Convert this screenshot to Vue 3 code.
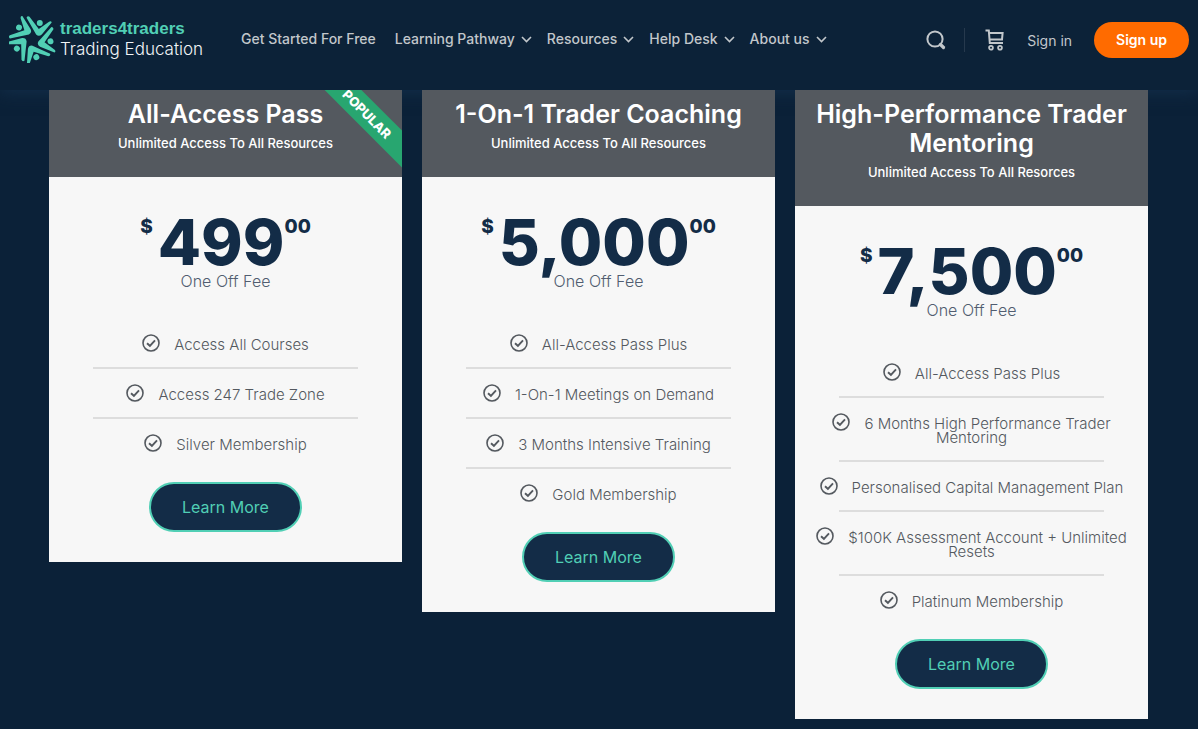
<script setup>
const navItems = [
  { label: 'Get Started For Free', menu: false },
  { label: 'Learning Pathway', menu: true },
  { label: 'Resources', menu: true },
  { label: 'Help Desk', menu: true },
  { label: 'About us', menu: true },
]

const plans = [
  {
    title: 'All-Access Pass',
    subtitle: 'Unlimited Access To All Resources',
    price: '499',
    popular: true,
    features: ['Access All Courses', 'Access 247 Trade Zone', 'Silver Membership'],
  },
  {
    title: '1-On-1 Trader Coaching',
    subtitle: 'Unlimited Access To All Resources',
    price: '5,000',
    features: ['All-Access Pass Plus', '1-On-1 Meetings on Demand', '3 Months Intensive Training', 'Gold Membership'],
  },
  {
    title: 'High-Performance Trader Mentoring',
    subtitle: 'Unlimited Access To All Resorces',
    price: '7,500',
    features: [
      'All-Access Pass Plus',
      '6 Months High Performance Trader Mentoring',
      'Personalised Capital Management Plan',
      '$100K Assessment Account + Unlimited Resets',
      'Platinum Membership',
    ],
  },
]

const turns = [0, 72, 144, 216, 288]
</script>

<template>
  <div class="page">
    <header class="topbar">
      <a class="logo" href="#">
        <svg class="logo-mark" viewBox="26 47 140 142" aria-hidden="true">
          <g v-for="t in turns" :key="t" :transform="`rotate(${t} 96 118)`">
            <circle cx="118" cy="68" r="9" />
            <path d="M78 52Q81 45 87 49L115 86L146 64Q153 61 154 67L124 103Q115 111 107 103Z" />
          </g>
        </svg>
        <span class="logo-text">
          <span class="logo-name">traders4traders</span>
          <span class="logo-sub">Trading Education</span>
        </span>
      </a>
      <nav class="nav">
        <a v-for="item in navItems" :key="item.label" href="#">
          {{ item.label }}
          <svg v-if="item.menu" class="chevron" viewBox="0 0 11 7" aria-hidden="true"><path d="M1 1L5.500 5.500L10 1" /></svg>
        </a>
      </nav>
      <div class="tools">
        <button class="icon-button search" type="button" aria-label="Search">
          <svg viewBox="0 0 20 20" width="20" height="20" aria-hidden="true">
            <circle cx="9" cy="9" r="7.600" stroke-width="2" />
            <path d="M14.500 14.500L17.500 17.500" stroke-width="3.200" stroke-linecap="round" />
          </svg>
        </button>
        <a class="icon-button cart" href="#" aria-label="Cart">
          <svg viewBox="0 0 20 22" width="20" height="22" aria-hidden="true">
            <path d="M0.500 1.500H3.800L4.800 14H18M4.200 4H17.600L17 10.600H4.800" stroke-width="2" />
            <circle cx="6" cy="18.800" r="1.900" stroke-width="1.800" />
            <circle cx="15" cy="18.800" r="1.900" stroke-width="1.800" />
          </svg>
        </a>
        <a class="signin" href="#">Sign in</a>
        <a class="signup" href="#">Sign up</a>
      </div>
    </header>

    <main class="plans">
      <article v-for="plan in plans" :key="plan.title" class="card">
        <div class="card-head">
          <h2>{{ plan.title }}</h2>
          <p>{{ plan.subtitle }}</p>
          <div v-if="plan.popular" class="ribbon"><span>POPULAR</span></div>
        </div>
        <div class="price">
          <span class="currency">$</span>
          <span class="amount">{{ plan.price }}</span>
          <span class="cents">00</span>
        </div>
        <p class="period">One Off Fee</p>
        <ul class="features">
          <li v-for="feature in plan.features" :key="feature">
            <svg class="check" viewBox="0 0 18 18" aria-hidden="true">
              <circle cx="9" cy="9" r="8" stroke-width="1.600" />
              <path d="M5 9.200L7.900 11.800L13 6.300" stroke-width="1.900" />
            </svg>
            <span>{{ feature }}</span>
          </li>
        </ul>
        <a class="learn" href="#">Learn More</a>
      </article>
    </main>
  </div>
</template>

<style>
body {
  margin: 0;
  background: #0b2138;
}
</style>

<style scoped>
.page {
  min-height: 100vh;
  background: #0b2138;
  font-family: Inter, "Open Sans", sans-serif;
}
a {
  color: inherit;
  text-decoration: none;
}
.topbar {
  display: flex;
  align-items: center;
  box-sizing: border-box;
  height: 90px;
  padding: 0 9px 10px;
  background: #0c2238;
  color: #c2c7cb;
  box-shadow: 0 2px 16px #132f4b;
}
.logo {
  display: flex;
  align-items: center;
  gap: 4px;
  margin-bottom: 2px;
}
.logo-mark {
  width: 47px;
  height: 47px;
  fill: #51cfb5;
}
.logo-text {
  display: flex;
  flex-direction: column;
  white-space: nowrap;
}
.logo-name {
  font: bold 17px/20px "Liberation Sans", Arial, sans-serif;
  color: #51cfb5;
}
.logo-sub {
  font-size: 17px;
  line-height: 20px;
  font-weight: 300;
  color: #f2f5f7;
}
.nav {
  display: flex;
  gap: 15px;
  margin-left: 38px;
  margin-bottom: 2px;
  font-size: 14px;
  line-height: 20px;
  font-weight: 500;
  white-space: nowrap;
}
.nav a {
  display: flex;
  align-items: center;
  gap: 6px;
}
.nav a:first-child {
  margin-right: 4px;
}
.chevron {
  width: 11px;
  height: 7px;
  fill: none;
  stroke: currentColor;
  stroke-width: 1.6;
}
.tools {
  display: flex;
  align-items: center;
  margin-left: auto;
  font-size: 14px;
  white-space: nowrap;
}
.icon-button {
  display: flex;
  padding: 2px 0;
  border: 0;
  background: none;
  color: inherit;
}
.icon-button svg {
  fill: none;
  stroke: currentColor;
}
.search {
  padding-right: 18px;
  border-right: 1px solid #26394d;
}
.cart {
  margin-left: 20px;
}
.signin {
  margin-left: 22px;
}
.signup {
  margin-left: 22px;
  padding: 0 22px;
  border-radius: 18px;
  background: #ff6b00;
  color: #fff;
  font-weight: 600;
  line-height: 36px;
}
.plans {
  display: grid;
  grid-template-columns: repeat(3, 1fr);
  align-items: start;
  gap: 20px;
  padding: 0 50px 9px 49px;
}
.card {
  position: relative;
  padding-bottom: 30px;
  background: #f7f7f7;
  text-align: center;
}
.card-head {
  padding: 10px 15px 25px;
  background: #54595f;
  color: #fff;
}
h2 {
  margin: 0;
  font-size: 25px;
  line-height: 29px;
  font-weight: 600;
}
.card-head p {
  margin: 5px 0 0;
  font-size: 13px;
  line-height: 18px;
  font-weight: 500;
}
.ribbon {
  position: absolute;
  top: 0;
  right: 0;
  width: 78px;
  height: 78px;
  overflow: hidden;
}
.ribbon span {
  position: absolute;
  top: 11px;
  left: -32px;
  width: 150px;
  background: #28a670;
  font-size: 13px;
  line-height: 26px;
  font-weight: 800;
  transform: rotate(45deg);
}
.price {
  display: flex;
  justify-content: center;
  margin-top: 40px;
  color: #132c47;
  font-weight: 800;
}
.currency,
.cents {
  font-size: 19px;
  line-height: 20px;
}
.currency {
  margin-right: 5px;
}
.amount {
  font-size: 63px;
  line-height: 50px;
}
.period {
  margin: 4px 0 0;
  color: #515d70;
  font-size: 16px;
  line-height: 20px;
  font-weight: 300;
}
.features {
  margin: 28px 0 0;
  padding: 0;
  list-style: none;
  color: #54595f;
  font-size: 15px;
  line-height: 14px;
  font-weight: 300;
}
.features li {
  padding: 15px;
}
.features li + li::before {
  content: "";
  display: block;
  width: 82%;
  margin: -15px auto 15px;
  border-top: 2px solid #ddd;
}
.check {
  width: 18px;
  height: 18px;
  margin-right: 14px;
  vertical-align: -2px;
  fill: none;
  stroke: #54595f;
}
.learn {
  display: inline-block;
  margin-top: 15px;
  padding: 0 31px;
  border: 2px solid #51cfb5;
  border-radius: 25px;
  background: #132c47;
  color: #51cfb5;
  font-size: 16px;
  line-height: 46px;
}
</style>
